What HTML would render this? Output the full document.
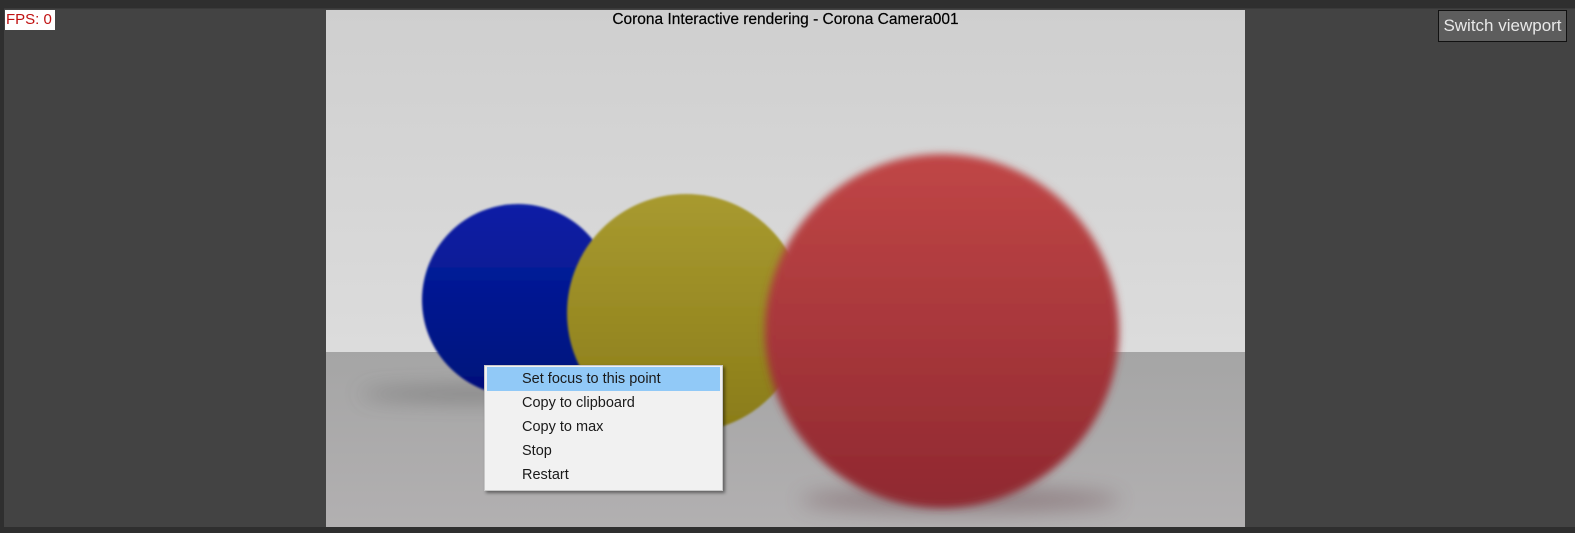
<!DOCTYPE html>
<html><head><style>
html,body{margin:0;padding:0;width:1575px;height:533px;overflow:hidden;background:#434343;font-family:"Liberation Sans",sans-serif}
.top{position:absolute;left:0;top:0;width:1575px;height:8px;background:#2f2f2f;border-bottom:1px solid #3a3a3a}
.lb{position:absolute;left:0;top:8px;width:4px;height:525px;background:#2f2f2f}
.bb{position:absolute;left:0;top:527px;width:1575px;height:6px;background:#2f2f2f}
.fps{position:absolute;left:5px;top:10px;width:49px;height:20px;background:#fff;color:#c01010;font-size:15px;line-height:20px;padding-left:1px}
.img{position:absolute;left:326px;top:10px;width:919px;height:517px;overflow:hidden}
.title{position:absolute;left:326px;top:10px;width:919px;text-align:center;font-size:15.5px;line-height:20px;color:#000;-webkit-text-stroke:0.2px #000}
.btn{position:absolute;left:1438px;top:10px;width:127px;height:30px;background:#5d5d5d;border:1px solid #111;color:#e8e8e8;font-size:17px;line-height:30px;text-align:center;white-space:nowrap;overflow:hidden}
.menu{position:absolute;left:484px;top:365px;width:237px;height:124px;background:#f1f1f1;border:1px solid #c8c8c8;box-shadow:2px 2px 3px rgba(0,0,0,.45)}
.it{height:24px;line-height:25px;font-size:14.5px;color:#1a1a1a;padding-left:35px;margin:0 2px}
.it.h{background:#91c9f7;margin-top:1px}
</style></head><body>
<div class="top"></div><div class="lb"></div><div class="bb"></div>
<div class="img">
<svg width="919" height="517" viewBox="326 10 919 517">
<defs>
<linearGradient id="wall" x1="0" y1="0" x2="0" y2="1"><stop offset="0" stop-color="#cfcfcf"/><stop offset="1" stop-color="#dcdcdc"/></linearGradient>
<linearGradient id="floor" x1="0" y1="0" x2="0" y2="1"><stop offset="0" stop-color="#a5a5a5"/><stop offset="1" stop-color="#b2b0b1"/></linearGradient>
<linearGradient id="blue" x1="0" y1="0" x2="0" y2="1"><stop offset="0" stop-color="#0a20a6"/><stop offset="1" stop-color="#00107a"/></linearGradient>
<linearGradient id="yel" x1="0" y1="0" x2="0" y2="1"><stop offset="0" stop-color="#a89a30"/><stop offset="1" stop-color="#8a7c18"/></linearGradient>
<linearGradient id="red" x1="0" y1="0" x2="0" y2="1"><stop offset="0" stop-color="#c04646"/><stop offset="1" stop-color="#8f2830"/></linearGradient>
<filter id="b1"><feGaussianBlur stdDeviation="1"/></filter>
<filter id="b3" x="-20%" y="-20%" width="140%" height="140%"><feGaussianBlur stdDeviation="4"/></filter>
<filter id="sh" x="-50%" y="-300%" width="200%" height="700%"><feGaussianBlur stdDeviation="10"/></filter>
</defs>
<rect x="326" y="10" width="919" height="342" fill="url(#wall)"/>
<rect x="326" y="352" width="919" height="175" fill="url(#floor)"/>
<ellipse cx="470" cy="394" rx="110" ry="6" fill="#555" opacity=".55" filter="url(#sh)"/>
<ellipse cx="960" cy="500" rx="160" ry="12" fill="#6a4a50" opacity=".45" filter="url(#sh)"/>
<circle cx="518" cy="300" r="96" fill="url(#blue)" filter="url(#b1)"/>
<circle cx="686" cy="313" r="119" fill="url(#yel)" filter="url(#b1)"/>
<circle cx="942" cy="331" r="177" fill="url(#red)" filter="url(#b3)"/>
</svg>
</div>
<div class="title">Corona Interactive rendering - Corona Camera001</div>
<div class="fps">FPS: 0</div>
<div class="btn">Switch viewport</div>
<div class="menu">
<div class="it h">Set focus to this point</div>
<div class="it">Copy to clipboard</div>
<div class="it">Copy to max</div>
<div class="it">Stop</div>
<div class="it">Restart</div>
</div>
</body></html>
